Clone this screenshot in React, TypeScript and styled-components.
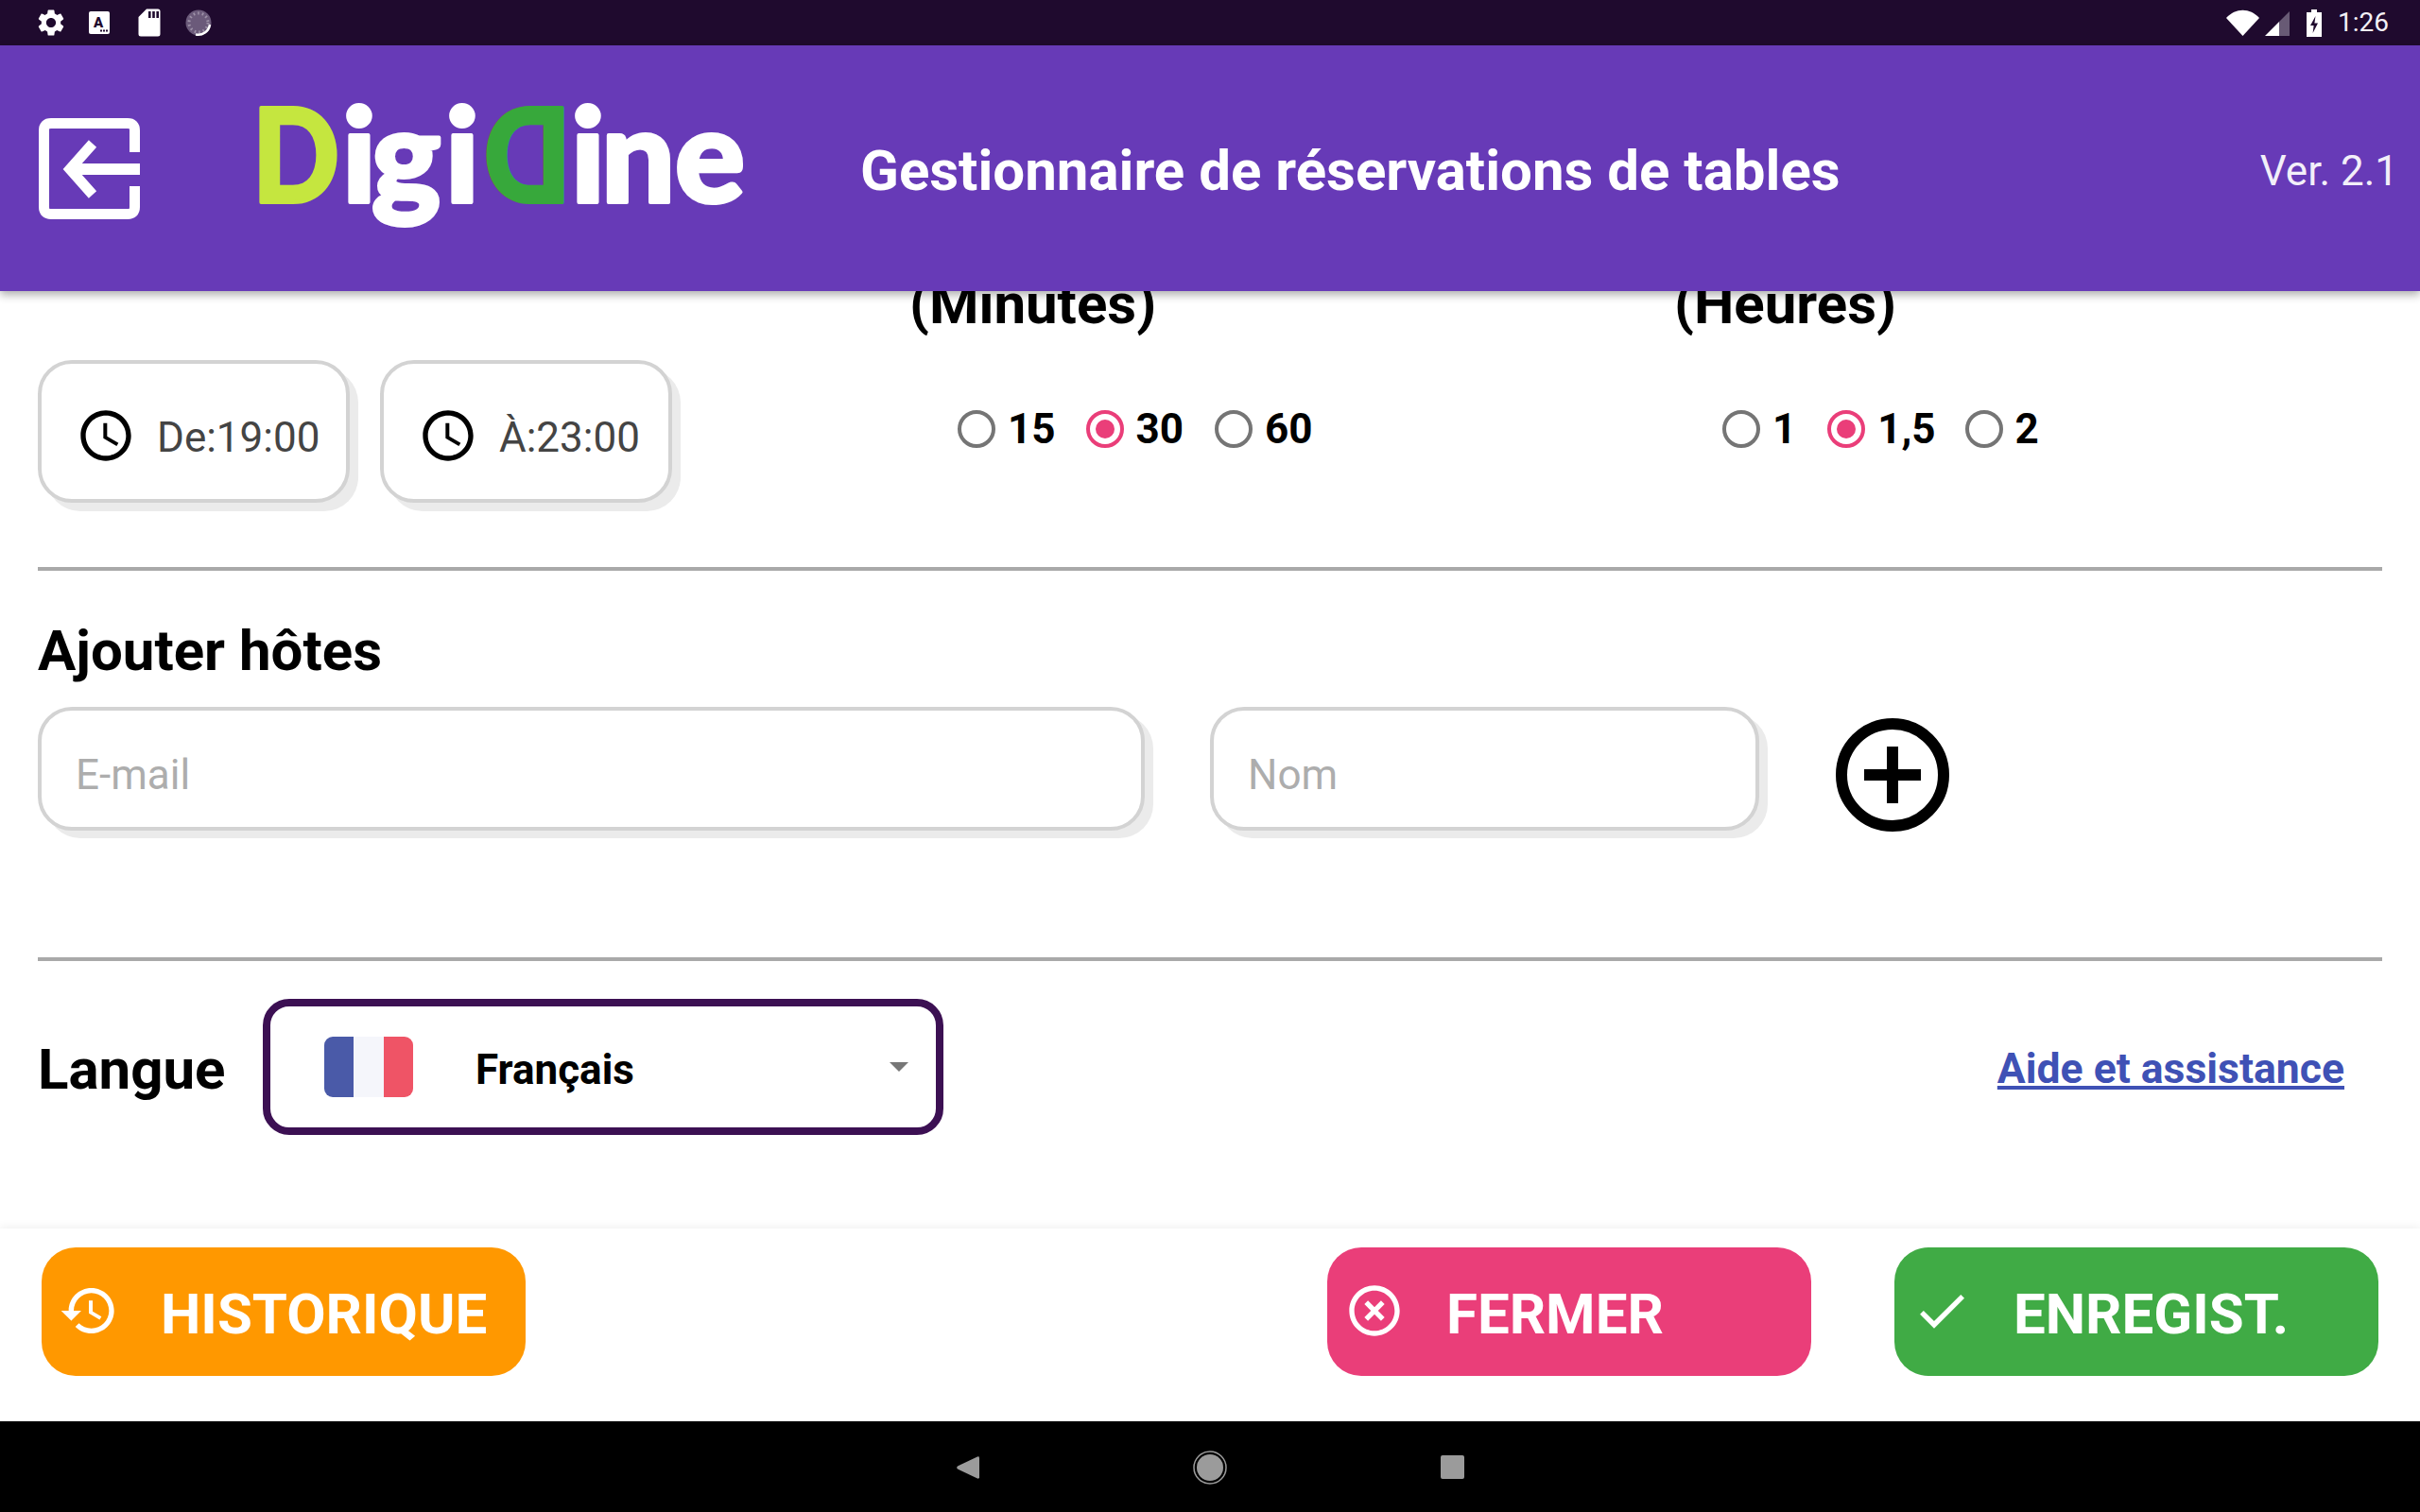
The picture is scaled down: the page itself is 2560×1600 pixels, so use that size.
import React from "react";
import styled, { createGlobalStyle } from "styled-components";

const Global = createGlobalStyle`
  html, body { margin: 0; padding: 0; background: #fff; }
  * { box-sizing: border-box; }
  body { font-family: Roboto, "Liberation Sans", sans-serif; }
`;

const Screen = styled.div`
  width: 2560px; height: 1600px; display: flex; flex-direction: column; overflow: hidden; background: #fff;
`;
const StatusBar = styled.div`
  height: 48px; flex: none; background: #1f0a2e; display: flex; align-items: center; padding: 0 33px 0 40px; color: #fff;
`;
const StatusLeft = styled.div`display: flex; align-items: center; gap: 22px;`;
const StatusRight = styled.div`margin-left: auto; display: flex; align-items: center; gap: 6px;`;
const Clock = styled.span`font-size: 28px; line-height: 48px; margin-left: 11px; color: #f4f1f6;`;

const Header = styled.header`
  height: 260px; flex: none; background: #673ab7; display: flex; align-items: center; position: relative; z-index: 2;
  box-shadow: 0 4px 9px rgba(0,0,0,.32); padding: 0 23px 0 41px; color: #fff;
`;
const BackIcon = styled.svg`width: 107px; height: 107px; flex: none;`;
const Logo = styled.svg`width: 530px; height: 200px; flex: none; margin-left: 122px; margin-top: -5px;`;
const Title = styled.h1`margin: 6px 0 0 110px; font-size: 60px; font-weight: 700; line-height: 70px; white-space: nowrap;`;
const Version = styled.span`margin: 6px 0 0 auto; font-size: 44px; line-height: 52px; color: #f3eff9;`;

const Scroll = styled.main`flex: 1; min-height: 0; overflow: hidden; padding: 0 40px;`;
const TopRow = styled.section`display: grid; grid-template-columns: 922px 809px 1fr; margin-top: -21px;`;
const Pills = styled.div`display: flex; gap: 32px; padding-top: 94px;`;
const Pill = styled.div<{ $w: number }>`
  width: ${p => p.$w}px; height: 151px; border: 4px solid #d3d3d3; border-radius: 36px; background: #fff;
  box-shadow: 9px 9px 0 #ebebeb; display: flex; align-items: center; padding-left: 36px; gap: 22px;
  font-size: 44px; color: #444;
`;
const PillText = styled.span`margin-top: 12px;`;
const ClockIcon = styled.svg`width: 64px; height: 64px; flex: none; margin-top: 8px;`;
const Col = styled.div``;
const ColHead = styled.h2`margin: 0; font-size: 60px; line-height: 70px; font-weight: 700; color: #000;`;
const Radios = styled.div`display: flex; align-items: center; margin: 77px 0 0 51px;`;
const RadioItem = styled.label<{ $gap: number }>`
  display: flex; align-items: center; gap: 13px; margin-right: ${p => p.$gap}px;
  font-size: 44px; font-weight: 700; line-height: 40px; color: #000;
`;
const RadioCircle = styled.span<{ $on?: boolean }>`
  width: 40px; height: 40px; border-radius: 50%; flex: none; display: flex; align-items: center; justify-content: center;
  border: 4px solid ${p => (p.$on ? "#ea3e79" : "#757575")};
  &::after { content: ""; width: 20px; height: 20px; border-radius: 50%; background: ${p => (p.$on ? "#ea3e79" : "transparent")}; }
`;
const Divider = styled.hr<{ $top: number }>`
  margin: ${p => p.$top}px 0 0; border: 0; height: 4px; background: #a9a9a9;
`;
const SectionTitle = styled.h2`margin: 50px 0 24px; font-size: 60px; line-height: 70px; font-weight: 700; color: #000;`;
const InputRow = styled.div`display: flex; align-items: flex-start;`;
const Field = styled.input<{ $w: number }>`
  width: ${p => p.$w}px; height: 131px; border: 4px solid #d3d3d3; border-radius: 36px; background: #fff;
  box-shadow: 9px 8px 0 #ebebeb; padding: 12px 0 0 36px; margin-right: 69px; outline: none;
  font-family: Roboto, sans-serif; font-size: 44px; color: #444;
  &::placeholder { color: #adadad; opacity: 1; }
`;
const AddIcon = styled.svg`width: 120px; height: 120px; flex: none; margin: 12px 0 0 12px;`;
const LangRow = styled.div`display: flex; align-items: center; margin-top: 40px;`;
const LangLabel = styled.span`font-size: 60px; font-weight: 700; line-height: 70px; color: #000; width: 238px; flex: none; padding-top: 5px;`;
const Select = styled.div`
  width: 720px; height: 144px; border: 8px solid #3c1053; border-radius: 28px; display: flex; align-items: center;
  padding: 0 29px 0 57px; font-size: 44px; font-weight: 700; color: #000;
`;
const SelectText = styled.span`padding-top: 5px;`;
const Flag = styled.div`
  width: 94px; height: 64px; border-radius: 9px; overflow: hidden; display: grid; grid-template-columns: 1fr 1fr 1fr; flex: none; margin-right: 66px;
`;
const Stripe = styled.span<{ $c: string }>`background: ${p => p.$c};`;
const Caret = styled.span`
  margin-left: auto; width: 0; height: 0; border-left: 10px solid transparent; border-right: 10px solid transparent; border-top: 10px solid #777;
`;
const HelpLink = styled.a`
  margin-left: auto; margin-right: 40px; padding-top: 3px; font-size: 44.5px; font-weight: 700; color: #3f51b5; text-decoration: underline;
`;

const Footer = styled.footer`
  flex: none; height: 204px; background: #fff; padding: 20px 44px 0; display: flex; gap: 88px; position: relative;
  box-shadow: 0 -3px 8px rgba(0,0,0,.05);
`;
const ActionButton = styled.button<{ $c: string; $push?: boolean }>`
  width: 512px; height: 136px; border: 0; border-radius: 36px; background: ${p => p.$c}; color: #fff;
  display: flex; align-items: center; gap: 44px; padding: 5px 0 0 18px; margin-left: ${p => (p.$push ? "auto" : "0")};
  font-family: Roboto, sans-serif; font-size: 60px; font-weight: 700; white-space: nowrap;
`;
const ButtonIcon = styled.svg`width: 64px; height: 64px; flex: none; fill: #fff; margin-top: -8px;`;
const NavBar = styled.nav`
  height: 96px; flex: none; background: #000; display: flex; align-items: center; justify-content: center; gap: 226px; padding-left: 1px; padding-top: 1px;
`;
const NavIcon = styled.svg`flex: none;`;

const p = {
  clock: "M11.99 2C6.47 2 2 6.48 2 12s4.47 10 9.99 10C17.52 22 22 17.52 22 12S17.52 2 11.99 2zM12 20c-4.42 0-8-3.58-8-8s3.58-8 8-8 8 3.58 8 8-3.58 8-8 8zm.5-13H11v6l5.25 3.15.75-1.23-4.5-2.67z",
  history: "M13 3c-4.97 0-9 4.03-9 9H1l3.89 3.89.07.14L9 12H6c0-3.87 3.13-7 7-7s7 3.13 7 7-3.13 7-7 7c-1.93 0-3.68-.79-4.94-2.06l-1.42 1.42C8.27 19.99 10.51 21 13 21c4.97 0 9-4.03 9-9s-4.03-9-9-9zm-1 5v5l4.28 2.54.72-1.21-3.5-2.08V8H12z",
  off: "M14.59 8L12 10.59 9.41 8 8 9.41 10.59 12 8 14.59 9.41 16 12 13.41 14.59 16 16 14.59 13.41 12 16 9.41 14.59 8zM12 2C6.47 2 2 6.47 2 12s4.47 10 10 10 10-4.47 10-10S17.53 2 12 2zm0 18c-4.41 0-8-3.59-8-8s3.59-8 8-8 8 3.59 8 8-3.59 8-8 8z",
  check: "M9 16.17L4.83 12l-1.42 1.41L9 19 21 7l-1.41-1.41z",
  gear: "M19.14 12.94c.04-.3.06-.61.06-.94 0-.32-.02-.64-.07-.94l2.03-1.58c.18-.14.23-.41.12-.61l-1.92-3.32c-.12-.22-.37-.29-.59-.22l-2.39.96c-.5-.38-1.03-.7-1.62-.94l-.36-2.54c-.04-.24-.24-.41-.48-.41h-3.84c-.24 0-.43.17-.47.41l-.36 2.54c-.59.24-1.13.57-1.62.94l-2.39-.96c-.22-.08-.47 0-.59.22L2.74 8.87c-.12.21-.08.47.12.61l2.03 1.58c-.05.3-.09.63-.09.94s.02.64.07.94l-2.03 1.58c-.18.14-.23.41-.12.61l1.92 3.32c.12.22.37.29.59.22l2.39-.96c.5.38 1.03.7 1.62.94l.36 2.54c.05.24.24.41.48.41h3.84c.24 0 .44-.17.47-.41l.36-2.54c.59-.24 1.13-.56 1.62-.94l2.39.96c.22.08.47 0 .59-.22l1.92-3.32c.12-.22.07-.47-.12-.61l-2.01-1.58zM12 15.6c-1.98 0-3.6-1.62-3.6-3.6s1.62-3.6 3.6-3.6 3.6 1.62 3.6 3.6-1.62 3.6-3.6 3.6z",
};

const Radio = ({ label, on, gap }: { label: string; on?: boolean; gap: number }) => (
  <RadioItem $gap={gap}><RadioCircle $on={on} />{label}</RadioItem>
);

const TimeIcon = () => <ClockIcon viewBox="0 0 24 24"><path d={p.clock} fill="#000" /></ClockIcon>;

const LogoGlyphs = () => (
  <Logo viewBox="0 -25 530 200" role="img" aria-label="DigiDine">
    <g fontFamily="Lato, sans-serif" fontWeight={900} fontSize={138} stroke="#fff" strokeWidth={4} strokeLinejoin="round" fill="#fff">
      <text transform="translate(-3 113) scale(.875 1)" fill="#c5e63f" stroke="#c5e63f">D</text>
      <text x="92" y="113">i</text>
      <text x="123" y="113">g</text>
      <text x="201" y="113">i</text>
      <text transform="translate(334 113) scale(-.875 1)" fill="#37a83b" stroke="#37a83b">D</text>
      <text x="334" y="113">i</text>
      <text x="366" y="113">n</text>
      <text x="444" y="113">e</text>
    </g>
  </Logo>
);

export default function App() {
  return (
    <Screen>
      <Global />
      <StatusBar>
        <StatusLeft>
          <svg width="34" height="34" viewBox="0 0 24 24" style={{ marginLeft: -3 }}><path d={p.gear} fill="#fff" /></svg>
          <svg width="24" height="26" viewBox="0 0 24 26">
            <rect x="1" y="1" width="22" height="24" rx="2" fill="#fff" />
            <text x="11" y="18" fontFamily="Roboto" fontWeight={900} fontSize="15" textAnchor="middle" fill="#1f0a2e">A</text>
            <path d="M13 20.5h2v2h-2zM16 20.5h2v2h-2zM19 20.5h2v2h-2z" fill="#1f0a2e" />
          </svg>
          <svg width="24" height="30" viewBox="0 0 24 30" style={{ marginLeft: 7 }}>
            <path d="M9 0.5H21a2.5 2.5 0 0 1 2.5 2.5V27a2.5 2.5 0 0 1-2.5 2.5H3A2.5 2.5 0 0 1 .5 27V9z" fill="#fff" />
            <path d="M11 3h2.6v7H11zM15.2 3h2.6v7h-2.6zM19.4 3H22v7h-2.6z" fill="#1f0a2e" />
          </svg>
          <svg width="28" height="30" viewBox="0 0 28 30" style={{ marginLeft: 4 }}>
            <circle cx="14" cy="15" r="13.5" fill="#6b5a7a" />
            <circle cx="14" cy="15" r="10" fill="none" stroke="#9e92a8" strokeWidth="3" strokeDasharray="1.6 3" />
            <path d="M26 17a12.5 12.5 0 0 1-15 10.5" fill="none" stroke="#fff" strokeWidth="2.4" />
          </svg>
        </StatusLeft>
        <StatusRight>
          <svg width="35" height="28" viewBox="0 0 35 28"><path d="M0 9C10-2 25-2 35 9L17.5 28z" fill="#fff" /></svg>
          <svg width="26" height="27" viewBox="0 0 26 27">
            <path d="M0 27L15 12V27z" fill="#fff" /><path d="M15 12L26 1V27H15z" fill="#685a75" />
          </svg>
          <svg width="16" height="29" viewBox="0 0 16 29" style={{ marginLeft: 12 }}>
            <path d="M5 0h6v3h5v26H0V3h5z" fill="#fff" />
            <path d="M9.5 7L4 17h3.6l-1 8L12 14.5H8.4z" fill="#1f0a2e" />
          </svg>
          <Clock>1:26</Clock>
        </StatusRight>
      </StatusBar>

      <Header>
        <BackIcon viewBox="0 0 107 107" fill="none" stroke="#fff">
          <path strokeWidth="11" d="M101.5 36V13q0-7.500-7.500-7.500H13q-7.500 0-7.500 7.500V94q0 7.500 7.500 7.500H94q7.500 0 7.500-7.500V72" />
          <path strokeWidth="12" d="M32 54H107" />
          <path strokeWidth="11" d="M57 27L33 54L57 81" />
        </BackIcon>
        <LogoGlyphs />
        <Title>Gestionnaire de réservations de tables</Title>
        <Version>Ver. 2.1</Version>
      </Header>

      <Scroll>
        <TopRow>
          <Pills>
            <Pill $w={330}><TimeIcon /><PillText>De:19:00</PillText></Pill>
            <Pill $w={309}><TimeIcon /><PillText>À:23:00</PillText></Pill>
          </Pills>
          <Col>
            <ColHead>(Minutes)</ColHead>
            <Radios>
              <Radio label="15" gap={32} />
              <Radio label="30" on gap={33} />
              <Radio label="60" gap={0} />
            </Radios>
          </Col>
          <Col>
            <ColHead>(Heures)</ColHead>
            <Radios>
              <Radio label="1" gap={33} />
              <Radio label="1,5" on gap={31} />
              <Radio label="2" gap={0} />
            </Radios>
          </Col>
        </TopRow>
        <Divider $top={68} />
        <SectionTitle>Ajouter hôtes</SectionTitle>
        <InputRow>
          <Field $w={1171} placeholder="E-mail" />
          <Field $w={581} placeholder="Nom" />
          <AddIcon viewBox="0 0 120 120" fill="none" stroke="#000">
            <circle cx="60" cy="60" r="54" strokeWidth="12" />
            <path d="M60 30V90M30 60H90" strokeWidth="12" />
          </AddIcon>
        </InputRow>
        <Divider $top={133} />
        <LangRow>
          <LangLabel>Langue</LangLabel>
          <Select>
            <Flag><Stripe $c="#4a5aa8" /><Stripe $c="#f5f6fb" /><Stripe $c="#ef5466" /></Flag>
            <SelectText>Français</SelectText>
            <Caret />
          </Select>
          <HelpLink href="#">Aide et assistance</HelpLink>
        </LangRow>
      </Scroll>

      <Footer>
        <ActionButton $c="#ff9800"><ButtonIcon viewBox="0 0 24 24"><path d={p.history} /></ButtonIcon>HISTORIQUE</ActionButton>
        <ActionButton $c="#ea3e79" $push><ButtonIcon viewBox="0 0 24 24"><path d={p.off} /></ButtonIcon>FERMER</ActionButton>
        <ActionButton $c="#40ab45"><ButtonIcon viewBox="0 0 24 24"><path d={p.check} /></ButtonIcon>ENREGIST.</ActionButton>
      </Footer>

      <NavBar>
        <NavIcon width="24" height="26" viewBox="0 0 24 26"><path d="M22 1.500a1.500 1.500 0 0 1 2 1.200V23.300a1.500 1.500 0 0 1-2 1.200L1 14.500a1.800 1.800 0 0 1 0-3z" fill="#9b9b9b" /></NavIcon>
        <NavIcon width="36" height="36" viewBox="0 0 36 36"><circle cx="18" cy="18" r="17" fill="none" stroke="#9b9b9b" strokeWidth="1.500" /><circle cx="18" cy="18" r="14" fill="#9b9b9b" /></NavIcon>
        <NavIcon width="25" height="25" viewBox="0 0 25 25"><rect width="25" height="25" rx="2" fill="#9b9b9b" /></NavIcon>
      </NavBar>
    </Screen>
  );
}
